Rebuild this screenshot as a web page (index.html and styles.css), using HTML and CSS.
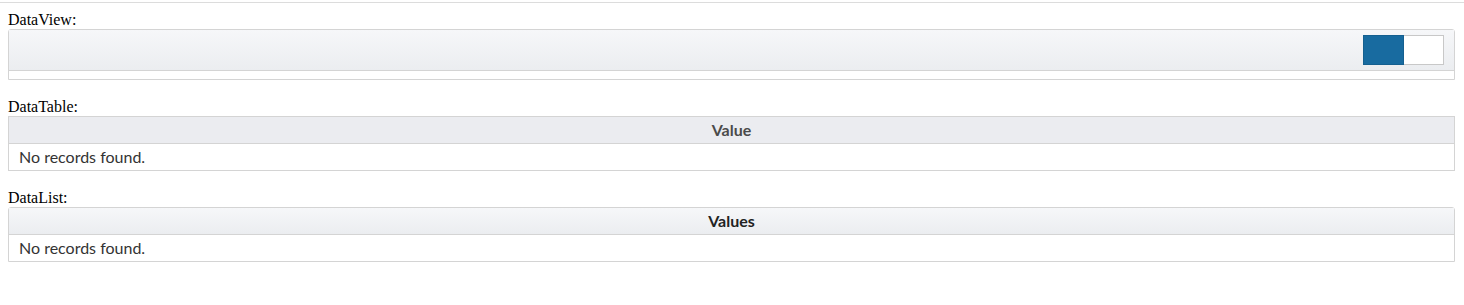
FILE: index.html
```html
<!DOCTYPE html>
<html lang="en">
<head>
    <meta charset="UTF-8">
    <meta name="viewport" content="width=device-width, initial-scale=1.0">
    <title>Data Components</title>
    <link rel="stylesheet" href="styles.css">
</head>
<body>
    <div class="top-rule"></div>

    <div class="page">
        <div class="block">
            <div class="block-label">DataView:</div>
            <div class="dataview">
                <div class="dataview-header">
                    <div class="layout-toggle">
                        <span class="toggle-btn active"></span>
                        <span class="toggle-btn"></span>
                    </div>
                </div>
                <div class="dataview-content"></div>
            </div>
        </div>

        <div class="block">
            <div class="block-label">DataTable:</div>
            <table class="datatable">
                <thead>
                    <tr><th>Value</th></tr>
                </thead>
                <tbody>
                    <tr><td>No records found.</td></tr>
                </tbody>
            </table>
        </div>

        <div class="block">
            <div class="block-label">DataList:</div>
            <div class="datalist">
                <div class="datalist-header">Values</div>
                <div class="datalist-content">No records found.</div>
            </div>
        </div>
    </div>
</body>
</html>
```

FILE: styles.css
```css
:root {
    --border-color: #d4d4d4;
    --text-color: #333333;
    --header-bg: #ebecf0;
    --primary-color: #186ba0;
}

body {
    margin: 0;
    padding: 0;
    background-color: #ffffff;
    font-family: 'Liberation Serif', 'Times New Roman', serif;
    font-size: 16px;
    color: #000000;
}

.top-rule {
    margin-top: 2px;
    border-top: 1px solid #dcdcdc;
}

.page {
    padding: 7px 9px 0 8px;
}

.block {
    margin-bottom: 17px;
}

.block-label {
    line-height: 19px;
}

/* DataView */
.dataview {
    border: 1px solid var(--border-color);
    border-radius: 3px 3px 0 0;
}

.dataview-header {
    display: flex;
    justify-content: flex-end;
    padding: 5px 10px;
    background: linear-gradient(to bottom, #f6f7f9, #ebedf0);
    border-bottom: 1px solid var(--border-color);
}

.layout-toggle {
    display: flex;
}

.toggle-btn {
    display: block;
    width: 40px;
    height: 30px;
    box-sizing: border-box;
    background-color: #ffffff;
    border: 1px solid #c8c8c8;
    border-left: none;
}

.toggle-btn.active {
    width: 41px;
    background-color: var(--primary-color);
    border: 1px solid #156090;
}

.dataview-content {
    height: 8px;
}

/* DataTable */
.datatable {
    width: 100%;
    border-collapse: collapse;
    font-family: Lato, 'Open Sans', sans-serif;
    font-size: 16px;
    color: var(--text-color);
}

.datatable th,
.datatable td {
    border: 1px solid var(--border-color);
    padding: 4px 10px;
    line-height: 18px;
}

.datatable th {
    background-color: var(--header-bg);
    color: #4a4a4a;
    font-weight: 700;
    text-align: center;
}

.datatable td {
    text-align: left;
}

/* DataList */
.datalist {
    border: 1px solid var(--border-color);
    border-radius: 3px 3px 0 0;
    font-family: Lato, 'Open Sans', sans-serif;
    font-size: 16px;
    color: var(--text-color);
}

.datalist-header {
    padding: 4px 10px;
    line-height: 18px;
    text-align: center;
    font-weight: 700;
    color: #222222;
    background: linear-gradient(to bottom, #f6f7f9, #ebedf0);
    border-bottom: 1px solid var(--border-color);
}

.datalist-content {
    padding: 4px 10px;
    line-height: 18px;
}
```
